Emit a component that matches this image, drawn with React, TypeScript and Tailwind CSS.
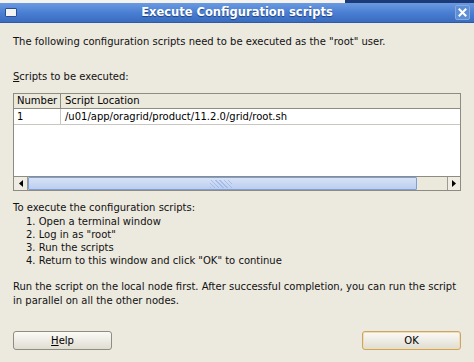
import React from "react";

const FONT = { fontFamily: '"DejaVu Sans", Verdana, sans-serif' };

function TitleBar() {
  return (
    <div className="flex flex-col">
      <div className="flex h-[3px]">
        <div className="w-[345px] bg-[#f4f3ef]" />
        <div className="flex-1 bg-[#1c3a78]" />
      </div>
      <div className="relative flex h-[20px] items-center justify-center bg-gradient-to-b from-[#6a9ae0] via-[#4a7fd3] to-[#3a6cc0] border-b border-[#2f5aa6]">
        <div className="absolute left-[5px] top-[5px] h-[9px] w-[12px] rounded-[1px] border border-[#2a4f8e] bg-[#f2f2f2]" />
        <span className="text-[11.5px] font-bold text-white [text-shadow:0_1px_1px_#1f3f7a]">
          Execute Configuration scripts
        </span>
        <div className="absolute right-[4px] top-[2px] flex h-[15px] w-[15px] items-center justify-center rounded-[2px] border border-[#86a9dc] bg-[#5e8fd6]">
          <svg width="9" height="9" viewBox="0 0 9 9">
            <path d="M1.5 1.5 L7.5 7.5 M7.5 1.5 L1.5 7.5" stroke="white" strokeWidth="2" strokeLinecap="square" />
          </svg>
        </div>
      </div>
    </div>
  );
}

function ScriptTable() {
  return (
    <div className="mx-[13px] mt-[10px] flex h-[98px] flex-col border border-[#8d8b82] bg-white">
      <div className="flex h-[15px] items-center border-b border-[#8d8b82] bg-[#ebe8dc] text-black">
        <div className="w-[47px] border-r border-[#8d8b82] pl-[3px] leading-[14px]">Number</div>
        <div className="pl-[4px] leading-[14px]">Script Location</div>
      </div>
      <div className="flex h-[16px] items-center border-b border-[#c9c7bf] text-black">
        <div className="h-full w-[47px] border-r border-[#c9c7bf] pl-[3px] leading-[15px]">1</div>
        <div className="pl-[4px] leading-[15px]">/u01/app/oragrid/product/11.2.0/grid/root.sh</div>
      </div>
      <div className="flex-1" />
      <div className="flex h-[14px] border-t border-[#8d8b82] bg-[#ebe8dc]">
        <div className="flex w-[14px] items-center justify-center border-r border-[#9c9a92] bg-[#efece3]">
          <svg width="4" height="7" viewBox="0 0 4 7">
            <path d="M4 0 L0 3.5 L4 7 Z" fill="black" />
          </svg>
        </div>
        <div className="flex flex-1">
          <div className="relative w-[389px] rounded-[1px] border border-[#7e9fd6] bg-gradient-to-b from-[#d6e2f6] to-[#bccdef]">
            <div className="absolute left-[181px] top-[2px] h-[8px] w-[22px] bg-[repeating-linear-gradient(45deg,#9fb5e3_0_1px,transparent_1px_3px)] opacity-80" />
          </div>
          <div className="flex-1" />
        </div>
        <div className="flex w-[13px] items-center justify-center border-l border-[#9c9a92] bg-[#efece3]">
          <svg width="4" height="7" viewBox="0 0 4 7">
            <path d="M0 0 L4 3.5 L0 7 Z" fill="black" />
          </svg>
        </div>
      </div>
    </div>
  );
}

function Button({ children, focus }: { children: React.ReactNode; focus?: boolean }) {
  return (
    <div
      className={
        "flex h-[19px] w-[99px] items-center justify-center rounded-[3px] border bg-gradient-to-b from-[#fbfaf6] to-[#e0ddd2] text-black " +
        (focus ? "border-[#caa56a] shadow-[inset_0_0_0_1px_#f3dcae]" : "border-[#8f8c82]")
      }
    >
      {children}
    </div>
  );
}

export default function App() {
  return (
    <div className="flex h-[362px] w-[474px] flex-col overflow-hidden bg-[#ece9df]" style={FONT}>
      <TitleBar />
      <div className="flex flex-1 flex-col text-[10px] leading-[13px] text-[#111]">
        <div className="mt-[12px] px-[13px]">
          The following configuration scripts need to be executed as the "root" user.
        </div>
        <div className="mt-[22px] px-[13px]">
          <span className="underline">S</span>cripts to be executed:
        </div>
        <ScriptTable />
        <div className="mt-[10px] px-[13px]">
          <div>To execute the configuration scripts:</div>
          <div className="pl-[13px]">
            <div className="mt-px">1. Open a terminal window</div>
            <div>2. Log in as "root"</div>
            <div>3. Run the scripts</div>
            <div>4. Return to this window and click "OK" to continue</div>
          </div>
        </div>
        <div className="mt-[13px] px-[13px] leading-[14px]">
          Run the script on the local node first. After successful completion, you can run the script in parallel on all the other nodes.
        </div>
        <div className="flex-1" />
        <div className="mb-[12px] flex justify-between px-[13px]">
          <Button>
            <span className="underline">H</span>elp
          </Button>
          <Button focus>OK</Button>
        </div>
      </div>
    </div>
  );
}
